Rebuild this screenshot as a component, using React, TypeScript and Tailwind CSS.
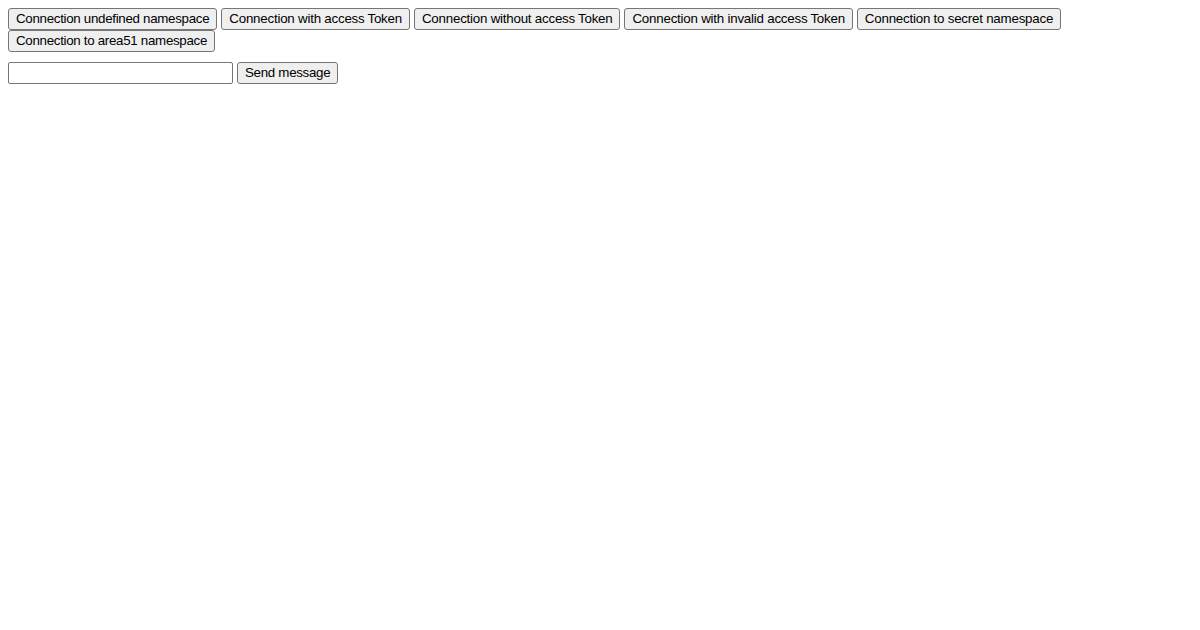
import React from 'react';

const labels = [
    { text: 'Connection undefined namespace', loose: false },
    { text: 'Connection with accessToken', loose: true },
    { text: 'Connection without accessToken', loose: true },
    { text: 'Connection with invalid accessToken', loose: true },
    { text: 'Connection to secret namespace', loose: true },
    { text: 'Connection to area51 namespace', loose: false },
];

const btn =
    'h-[22px] px-[7px] border border-[#767676] rounded-[3px] bg-[#efefef] text-black text-[13.333px] leading-[20px] whitespace-nowrap';

function Label({ text }: { text: string }) {
    if (!text.endsWith('accessToken')) return <>{text}</>;
    return (
        <>
            {text.slice(0, -5)}
            <span className="ml-[3px]">Token</span>
        </>
    );
}

export default function App() {
    return (
        <div className="min-h-screen bg-white p-2 text-black" style={{ fontFamily: '"Liberation Sans", Arial, sans-serif' }}>
            <div className="flex flex-wrap gap-x-1">
                {labels.map((label) => (
                    <button
                        key={label.text}
                        className={`${btn} ${label.loose ? 'tracking-[-0.22px]' : 'tracking-[-0.3px]'}`}
                    >
                        <Label text={label.text} />
                    </button>
                ))}
            </div>
            <div className="flex gap-1 mt-[10px]">
                <input
                    type="text"
                    className="w-[225px] h-[22px] border border-[#767676] rounded-[2px] bg-white px-[2px] text-[13.333px]"
                />
                <button className={`${btn} tracking-[-0.3px]`}>Send message</button>
            </div>
        </div>
    );
}
